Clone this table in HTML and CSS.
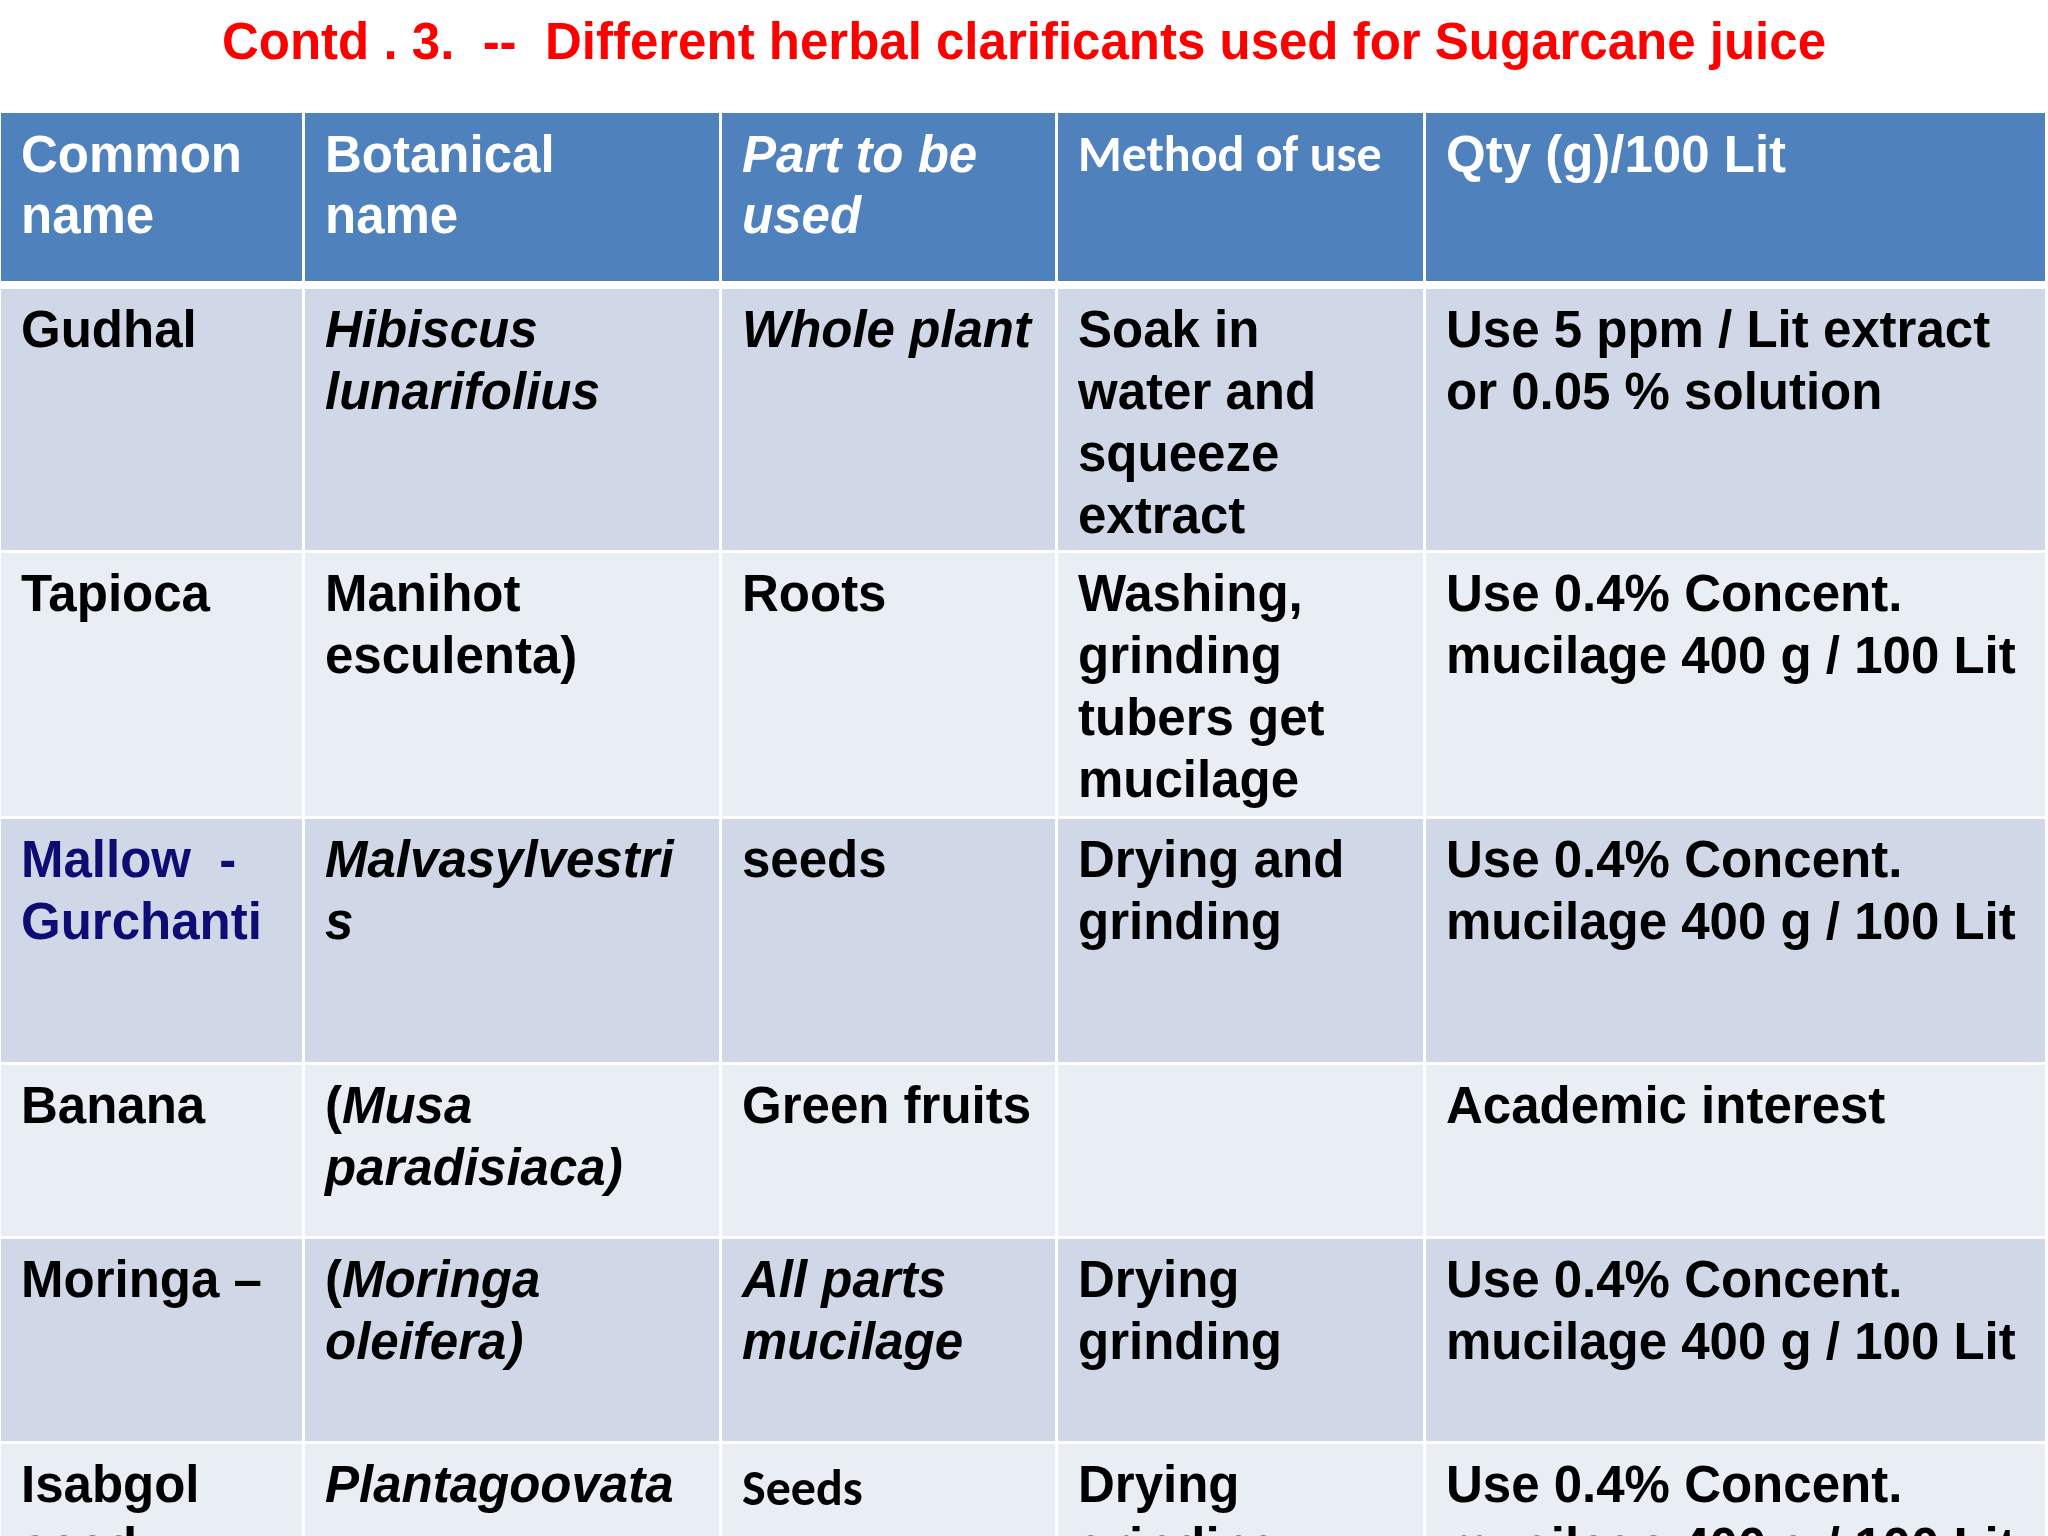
FILE: index.html
```html
<!DOCTYPE html>
<html>
<head>
<meta charset="utf-8">
<link rel="stylesheet" href="styles.css">
</head>
<body>
<div class="slide">
  <h1 class="title">Contd . 3.  --  Different herbal clarificants used for Sugarcane juice</h1>
  <div class="table">
    <div class="row head">
      <div class="cell">Common name</div>
      <div class="cell">Botanical name</div>
      <div class="cell"><i>Part to be used</i></div>
      <div class="cell calibri">Method of use</div>
      <div class="cell">Qty (g)/100 Lit</div>
    </div>
    <div class="row odd r1">
      <div class="cell">Gudhal</div>
      <div class="cell"><i>Hibiscus lunarifolius</i></div>
      <div class="cell"><i>Whole plant</i></div>
      <div class="cell">Soak in water and squeeze extract</div>
      <div class="cell">Use 5 ppm / Lit extract or 0.05 % solution</div>
    </div>
    <div class="row even r2">
      <div class="cell">Tapioca</div>
      <div class="cell">Manihot esculenta)</div>
      <div class="cell">Roots</div>
      <div class="cell">Washing, grinding tubers get mucilage</div>
      <div class="cell">Use 0.4% Concent. mucilage 400 g / 100 Lit</div>
    </div>
    <div class="row odd r3">
      <div class="cell navy">Mallow&nbsp;&nbsp;- Gurchanti</div>
      <div class="cell"><i>Malvasylvestri<br>s</i></div>
      <div class="cell">seeds</div>
      <div class="cell">Drying and grinding</div>
      <div class="cell">Use 0.4% Concent. mucilage 400 g / 100 Lit</div>
    </div>
    <div class="row even r4">
      <div class="cell">Banana</div>
      <div class="cell">(<i>Musa paradisiaca)</i></div>
      <div class="cell">Green fruits</div>
      <div class="cell"></div>
      <div class="cell">Academic interest</div>
    </div>
    <div class="row odd r5">
      <div class="cell">Moringa –</div>
      <div class="cell">(<i>Moringa oleifera)</i></div>
      <div class="cell"><i>All parts mucilage</i></div>
      <div class="cell">Drying grinding</div>
      <div class="cell">Use 0.4% Concent. mucilage 400 g / 100 Lit</div>
    </div>
    <div class="row even r6">
      <div class="cell">Isabgol seed</div>
      <div class="cell"><i>Plantagoovata</i></div>
      <div class="cell calibri small">Seeds</div>
      <div class="cell">Drying grinding</div>
      <div class="cell">Use 0.4% Concent. mucilage 400 g / 100 Lit</div>
    </div>
  </div>
</div>
</body>
</html>
```

FILE: styles.css
```css
html, body {
  margin: 0;
  padding: 0;
  background: #ffffff;
  overflow: hidden;
}

.slide {
  width: 2048px;
  height: 1536px;
  overflow: hidden;
  font-family: "Liberation Sans", Arial, sans-serif;
  font-weight: bold;
}

.title {
  margin: 0;
  height: 113px;
  box-sizing: border-box;
  padding-top: 12px;
  font-size: 51px;
  line-height: 60px;
  font-weight: bold;
  color: #ff0000;
  text-align: center;
  white-space: pre;
}

.table {
  display: flex;
  flex-direction: column;
  gap: 3px;
  padding-left: 1px;
}

.row {
  display: grid;
  grid-template-columns: 301px 414px 333px 365px 619px;
  column-gap: 3px;
}

.cell {
  box-sizing: border-box;
  padding: 10px 18px 0 20px;
  font-size: 51px;
  line-height: 62px;
  color: #000000;
}

.head {
  height: 168px;
  margin-bottom: 5px;
}

.head .cell {
  background: #4f81bd;
  color: #ffffff;
  padding-top: 11px;
  line-height: 61px;
}

.odd .cell { background: #d0d8e8; }
.even .cell { background: #e9edf4; }

.r1 { height: 261px; }
.r2 { height: 263px; }
.r3 { height: 243px; }
.r4 { height: 171px; }
.r5 { height: 202px; }
.r6 { height: 220px; }

.navy { color: #0c0c72; }

.calibri {
  font-family: Carlito, Lato, "Open Sans", sans-serif;
  font-size: 50px;
}

.head .calibri {
  padding-top: 10px;
}

.small {
  font-size: 50px;
  padding-top: 13px;
}

i { font-style: italic; }
```
